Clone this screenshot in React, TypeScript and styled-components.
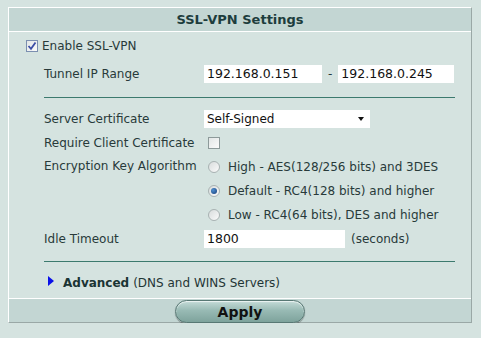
import React from "react";
import styled, { createGlobalStyle } from "styled-components";

const Global = createGlobalStyle`
  html, body {
    margin: 0;
    background: #d5e3e0;
    font-family: "DejaVu Sans", Verdana, sans-serif;
  }
  body {
    padding: 7px 9px 0 8px;
  }
`

const Panel = styled.div`
  width: 462px;
  border-top: 1px solid #ffffff;
  border-left: 1px solid #ffffff;
  border-right: 1px solid #9aa8a6;
  border-bottom: 1px solid #9aa8a6;
  background: #d5e3e0;
  color: #283a3a;
  font-size: 12px;
`

const Header = styled.div`
  height: 23px;
  line-height: 23px;
  background: #c3d6d3;
  border-bottom: 1px solid #ffffff;
  text-align: center;
  font-weight: bold;
  font-size: 13px;
  color: #1d3d3d;
`

const Body = styled.div`
  padding: 2px 16px 3px 17px;
`

const Row = styled.div<{ $top?: number }>`
  display: flex;
  align-items: center;
  height: 24px;
  margin-top: ${p => p.$top ?? 0}px;
`

const Grid = styled.div<{ $top?: number }>`
  display: grid;
  grid-template-columns: 160px 1fr;
  grid-auto-rows: 24px;
  align-items: center;
  margin-left: 18px;
  margin-top: ${p => p.$top ?? 0}px;
`

const Label = styled.span<{ $span?: number }>`
  white-space: nowrap;
  grid-row: span ${p => p.$span ?? 1};
  align-self: ${p => (p.$span ? "start" : "center")};
  line-height: ${p => (p.$span ? "22px" : "normal")};
`

const Cell = styled.div`
  display: flex;
  align-items: center;
  gap: 6px;
`

const TextBox = styled.div<{ $w: number }>`
  width: ${p => p.$w}px;
  height: 18px;
  line-height: 18px;
  background: #ffffff;
  color: #111;
  padding: 0 3px;
  box-sizing: border-box;
  font-size: 12.5px;
  white-space: nowrap;
`

const Select = styled(TextBox)`
  display: flex;
  justify-content: space-between;
  align-items: center;
  padding-right: 6px;
  font-size: 12px;
  &::after {
    content: '';
    border-left: 3.5px solid transparent;
    border-right: 3.5px solid transparent;
    border-top: 4px solid #111;
  }
`

const Box = styled.span<{ $checked?: boolean; $left?: number }>`
  display: inline-flex;
  align-items: center;
  justify-content: center;
  width: 12px;
  height: 12px;
  box-sizing: border-box;
  border: 1px solid ${p => (p.$checked ? "#7b8fb0" : "#8d9a9a")};
  background: linear-gradient(135deg, #e2e6e6, #fbfbfb);
  margin-left: ${p => p.$left ?? 0}px;
  margin-right: 4px;
`

const Radio = styled.span<{ $on?: boolean }>`
  display: inline-flex;
  align-items: center;
  justify-content: center;
  width: 12px;
  height: 12px;
  border-radius: 50%;
  box-sizing: border-box;
  border: 1px solid #a8b2b2;
  background: linear-gradient(135deg, #d8dcdc, #fafafa);
  margin: 0 8px 0 4px;
  flex: none;
  &::after {
    content: '';
    display: ${p => (p.$on ? "block" : "none")};
    width: 6px;
    height: 6px;
    border-radius: 50%;
    background: radial-gradient(circle at 35% 35%, #4f8fd0, #163d78);
  }
`

const Option = styled.div`
  display: flex;
  align-items: center;
  height: 24px;
  white-space: nowrap;
`

const Options = styled.div`
  grid-row: span 3;
  align-self: stretch;
`

const Rule = styled.div<{ $top: number }>`
  height: 1px;
  background: #3c7a6e;
  margin: ${p => p.$top}px 0 0 18px;
`

const Advanced = styled.div`
  display: flex;
  align-items: center;
  height: 24px;
  margin: 9px 0 0 22px;
  color: #1f3535;
  b {
    color: #1a3434;
    margin-right: 4px;
  }
  &::before {
    content: '';
    border-top: 5px solid transparent;
    border-bottom: 5px solid transparent;
    border-left: 6px solid #0a10e8;
    margin-right: 9px;
    margin-top: -4px;
  }
`

const Footer = styled.div`
  height: 23px;
  background: #c3d6d3;
  border-top: 1px solid #ffffff;
  display: flex;
  justify-content: center;
  align-items: flex-end;
`

const Button = styled.button`
  width: 130px;
  height: 23px;
  border-radius: 12px;
  border: 1px solid #587874;
  background: linear-gradient(#c4dbd7, #98bab4 45%, #7ea39c);
  box-shadow: inset 0 1px 1px rgba(255, 255, 255, 0.7), 0 1px 1px rgba(0, 0, 0, 0.35);
  font-family: "DejaVu Sans", Verdana, sans-serif;
  font-weight: bold;
  font-size: 14px;
  color: #111;
  padding: 0;
  margin-bottom: -1px;
`

function Check() {
  return (
    <svg width="10" height="10" viewBox="0 0 10 10">
      <path d="M1.5 5 L4 7.8 L8.5 1.5" fill="none" stroke="#3c4ea6" strokeWidth="1.8" />
    </svg>
  )
}

export default function App() {
  return (
    <>
      <Global />
      <Panel>
        <Header>SSL-VPN Settings</Header>
        <Body>
          <Row>
            <Box $checked><Check /></Box>
            Enable SSL-VPN
          </Row>
          <Grid $top={4}>
            <Label>Tunnel IP Range</Label>
            <Cell>
              <TextBox $w={118}>192.168.0.151</TextBox>
              <span>-</span>
              <TextBox $w={116}>192.168.0.245</TextBox>
            </Cell>
          </Grid>
          <Rule $top={11} />
          <Grid $top={9}>
            <Label>Server Certificate</Label>
            <Cell>
              <Select $w={166}>Self-Signed</Select>
            </Cell>
            <Label>Require Client Certificate</Label>
            <Cell>
              <Box $left={4} />
            </Cell>
            <Label $span={3}>Encryption Key Algorithm</Label>
            <Options>
              <Option><Radio />High - AES(128/256 bits) and 3DES</Option>
              <Option><Radio $on />Default - RC4(128 bits) and higher</Option>
              <Option><Radio />Low - RC4(64 bits), DES and higher</Option>
            </Options>
            <Label>Idle Timeout</Label>
            <Cell>
              <TextBox $w={141}>1800</TextBox>
              <span>(seconds)</span>
            </Cell>
          </Grid>
          <Rule $top={10} />
          <Advanced>
            <b>Advanced</b>(DNS and WINS Servers)
          </Advanced>
        </Body>
        <Footer>
          <Button>Apply</Button>
        </Footer>
      </Panel>
    </>
  )
}
